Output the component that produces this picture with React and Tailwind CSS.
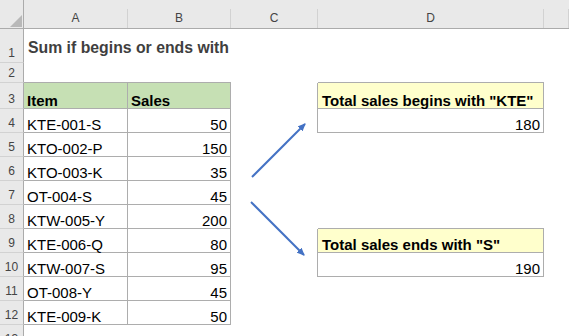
import React from "react";

const items = [
  ["KTE-001-S", 50],
  ["KTO-002-P", 150],
  ["KTO-003-K", 35],
  ["OT-004-S", 45],
  ["KTW-005-Y", 200],
  ["KTE-006-Q", 80],
  ["KTW-007-S", 95],
  ["OT-008-Y", 45],
  ["KTE-009-K", 50],
];

const font = { fontFamily: '"Liberation Sans", Arial, sans-serif' };

function ColHead({ label }) {
  return (
    <div className="flex items-end bg-[#e9e9e9] border-b border-b-[#ababab]">
      <div className="flex-1 h-full flex items-end justify-center pb-[3px] text-[12px] leading-[14px] text-[#444]">
        {label}
      </div>
      <div className="w-px h-[19px] bg-[#d2d2d2]" />
    </div>
  );
}

function RowHead({ n }) {
  return (
    <div className="flex items-end justify-center pb-[2px] bg-[#e9e9e9] border-r border-r-[#ababab] border-b border-b-[#d2d2d2] text-[12px] leading-[14px] text-[#444]">
      {n}
    </div>
  );
}

export default function App() {
  const cells = [];

  // column header row
  cells.push(
    <div key="corner" className="relative bg-[#e9e9e9] border-r border-b border-[#ababab]">
      <svg className="absolute left-[10px] top-[15px]" width="12" height="12" viewBox="0 0 12 12">
        <polygon points="12,0 12,12 0,12" fill="#b8b8b8" />
      </svg>
    </div>
  );
  ["A", "B", "C", "D", ""].forEach((l, i) => cells.push(<ColHead key={"h" + i} label={l} />));

  // row 1: title
  cells.push(<RowHead key="r1" n={1} />);
  cells.push(
    <div
      key="title"
      className="col-span-5 flex items-end pb-[7px] px-[4px] whitespace-nowrap text-[15.8px] leading-[16px] font-bold text-[#3f3f3f]"
    >
      Sum if begins or ends with
    </div>
  );

  // row 2: top edges of the table and first result box
  cells.push(<RowHead key="r2" n={2} />);
  cells.push(<div key="2a" className="border-b border-[#adadad]" />);
  cells.push(<div key="2b" className="border-b border-[#adadad]" />);
  cells.push(<div key="2c" />);
  cells.push(<div key="2d" className="border-b border-[#adadad]" />);
  cells.push(<div key="2e" />);

  // row 3: headers
  cells.push(<RowHead key="r3" n={3} />);
  cells.push(
    <div key="3a" className="flex items-end px-[3px] bg-[#c6e0b4] border-r border-b border-[#adadad] text-[15px] leading-[15px] font-bold text-black">
      Item
    </div>
  );
  cells.push(
    <div key="3b" className="flex items-end px-[3px] bg-[#c6e0b4] border-r border-b border-[#adadad] text-[15px] leading-[15px] font-bold text-black">
      Sales
    </div>
  );
  cells.push(<div key="3c" className="border-r border-[#adadad]" />);
  cells.push(
    <div key="3d" className="flex items-end px-[4px] bg-[#ffffcc] border-r border-b border-[#adadad] whitespace-nowrap text-[15px] leading-[15px] font-bold text-black">
      Total sales begins with "KTE"
    </div>
  );
  cells.push(<div key="3e" />);

  items.forEach(([name, value], i) => {
    const r = i + 4;
    cells.push(<RowHead key={"r" + r} n={r} />);
    cells.push(
      <div key={r + "a"} className="flex items-end px-[3px] border-r border-b border-[#adadad] text-[15px] leading-[15px] text-black">
        {name}
      </div>
    );
    cells.push(
      <div key={r + "b"} className="flex items-end justify-end px-[3px] border-r border-b border-[#adadad] text-[15px] leading-[15px] text-black">
        {value}
      </div>
    );

    const boxRow = r === 4 || r === 9 || r === 10;
    cells.push(<div key={r + "c"} className={boxRow ? "border-r border-[#adadad]" : ""} />);

    if (r === 4 || r === 10) {
      cells.push(
        <div key={r + "d"} className="flex items-end justify-end px-[3px] border-r border-b border-[#adadad] text-[15px] leading-[15px] text-black">
          {r === 4 ? 180 : 190}
        </div>
      );
    } else if (r === 9) {
      cells.push(
        <div key={r + "d"} className="flex items-end px-[4px] bg-[#ffffcc] border-r border-b border-[#adadad] whitespace-nowrap text-[15px] leading-[15px] font-bold text-black">
          Total sales ends with "S"
        </div>
      );
    } else if (r === 8) {
      cells.push(<div key={r + "d"} className="border-b border-[#adadad]" />);
    } else {
      cells.push(<div key={r + "d"} />);
    }
    cells.push(<div key={r + "e"} />);
  });

  // row 13 (partly visible)
  cells.push(<RowHead key="r13" n={13} />);

  return (
    <div className="relative w-[569px] h-[336px] overflow-hidden bg-white" style={font}>
      <div className="grid grid-cols-[24px_104px_103px_87px_226px_1fr] grid-rows-[29px_34px_20px_26px_repeat(9,24px)_24px]">
        {cells}
      </div>

      {/* connector arrows drawn over the sheet */}
      <svg className="absolute inset-0 pointer-events-none" width="569" height="336" viewBox="0 0 569 336">
        <defs>
          <marker id="head" markerWidth="8" markerHeight="8" refX="7" refY="4" orient="auto" markerUnits="userSpaceOnUse">
            <polygon points="0,0.5 8,4 0,7.5" fill="#4472c4" />
          </marker>
        </defs>
        <line x1="252" y1="177" x2="305" y2="124" stroke="#4472c4" strokeWidth="2" markerEnd="url(#head)" />
        <line x1="251" y1="202" x2="304" y2="255" stroke="#4472c4" strokeWidth="2" markerEnd="url(#head)" />
      </svg>
    </div>
  );
}
